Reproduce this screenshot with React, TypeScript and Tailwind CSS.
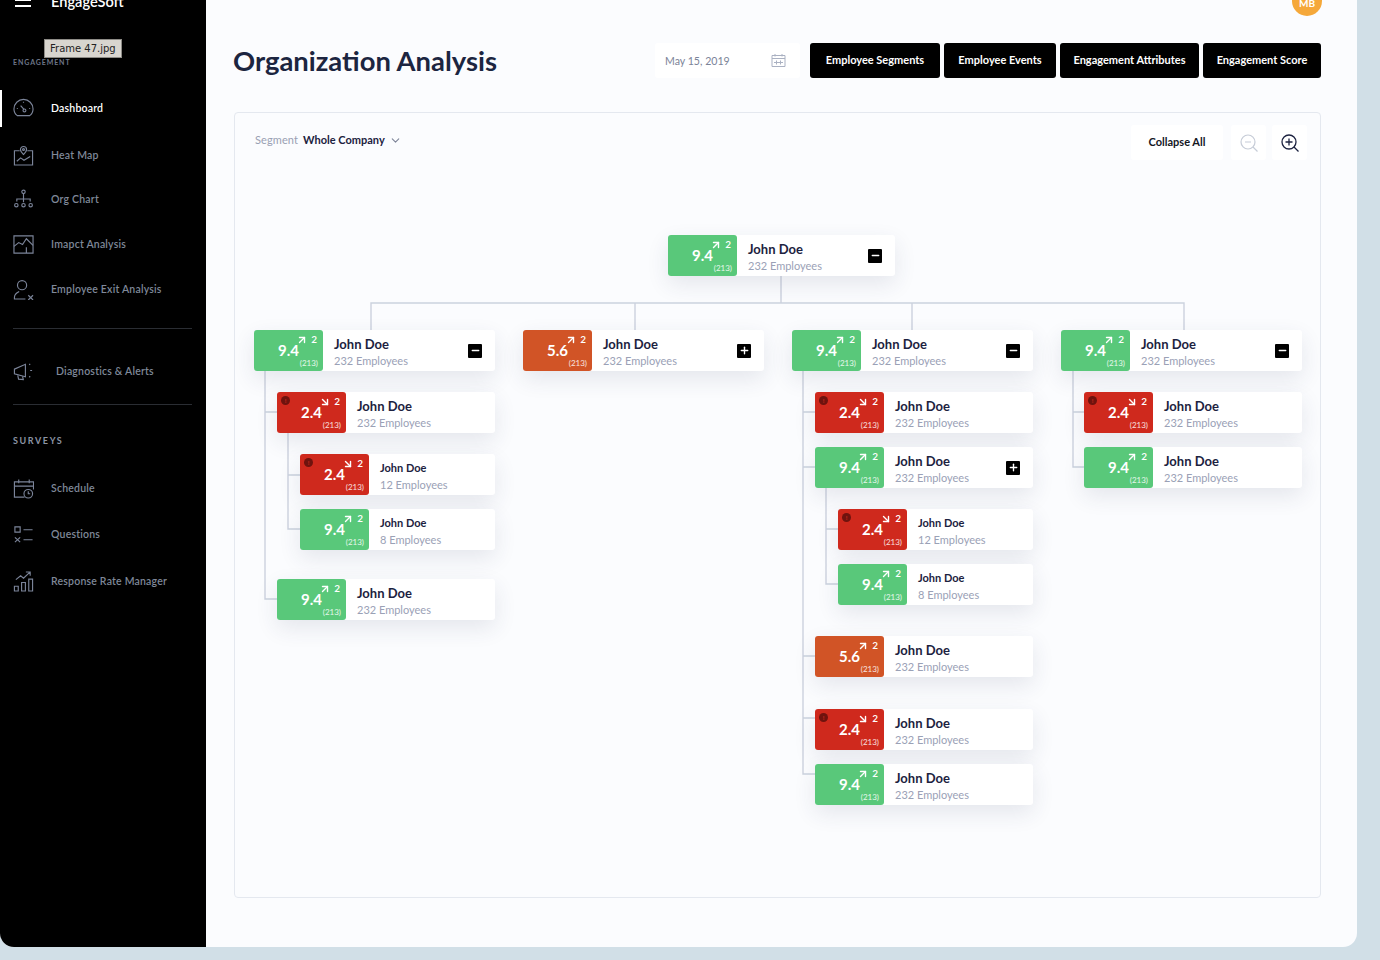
import { ArrowDownRight, ArrowUpRight, ChevronDown, Minus, Plus } from "lucide-react"
import type { ReactNode } from "react"

type Tone = "green" | "orange" | "red"

const icon = { fill: "none", stroke: "#7b8499", strokeWidth: 1.2, width: 21, height: 21, viewBox: "0 0 22 22" }

const DashIcon = () => (
  <svg {...icon}>
    <path d="M4.5 18.5h13c2-1.500 3.500-4 3.500-7a10 10 0 0 0-20 0c0 3 1.500 5.500 3.500 7z" />
    <path d="M8 8l3.500 4" />
    <circle cx="12" cy="13" r="1.500" />
    <path d="M4 11h1M17 11h1M11 4v1" />
  </svg>
)
const HeatIcon = () => (
  <svg {...icon}>
    <path d="M7 6H1.500v15h19V6H15" />
    <path d="M11 10C9 8 7.800 6.500 7.800 4.800a3.200 3.200 0 0 1 6.400 0C14.200 6.500 13 8 11 10z" />
    <circle cx="11" cy="4.800" r="1" />
    <path d="M4 17l4-3.500 3.500 2.500 6.500-4" />
  </svg>
)
const OrgIcon = () => (
  <svg {...icon}>
    <circle cx="11" cy="3" r="1.800" />
    <path d="M11 5v9M4 13v-2.500h14V13" />
    <circle cx="3.500" cy="17" r="1.800" />
    <circle cx="11" cy="17" r="1.800" />
    <circle cx="18.500" cy="17" r="1.800" />
  </svg>
)
const ImpactIcon = () => (
  <svg {...icon}>
    <path d="M1 2h20v18H1z" />
    <path d="M1 13l5-4 4 2 4-6 7 7M14 14v6" />
  </svg>
)
const ExitIcon = () => (
  <svg {...icon}>
    <circle cx="9.500" cy="6.500" r="4.800" />
    <path d="M13 21H1.500v-2c0-3 3-5 5-6" />
    <path d="M16 17l5 5M21 17l-5 5" />
  </svg>
)
const MegaIcon = () => (
  <svg {...icon}>
    <path d="M1.500 8.500L13 3.500v13l-11.500-3z" />
    <path d="M5 15l.800 4 5 .5-.8-3.500" />
    <path d="M17 4l1-1M18 10h2M17 16l1 1" />
  </svg>
)
const ScheduleIcon = () => (
  <svg {...icon}>
    <path d="M12 20H1.500V4h20v8" />
    <path d="M1.500 8.500h20M6 1.500v4M17 1.500v4" />
    <circle cx="16" cy="16.500" r="4.500" />
    <path d="M16 14v2.500h2" />
  </svg>
)
const QuestionsIcon = () => (
  <svg {...icon}>
    <path d="M2 3h5.500v5.500H2zM11 6h9.500M2 14l5.500 5M7.500 14L2 19M11 16.500h9.500" />
  </svg>
)
const ResponseIcon = () => (
  <svg {...icon}>
    <path d="M1.500 16h4v5h-4zM9 12h4v9H9zM16.500 8.500h4V21h-4z" />
    <path d="M3 9l5-4 3 2.500 6.500-6M13.500 1h4.500v4" />
  </svg>
)

const topNav = [
  { label: "Dashboard", icon: <DashIcon />, space: "", active: true },
  { label: "Heat Map", icon: <HeatIcon />, space: "mt-[10px]" },
  { label: "Org Chart", icon: <OrgIcon />, space: "mt-[7px]" },
  { label: "Imapct Analysis", icon: <ImpactIcon />, space: "mt-[8px]" },
  { label: "Employee Exit Analysis", icon: <ExitIcon />, space: "mt-[8px]" },
]

const surveyNav = [
  { label: "Schedule", icon: <ScheduleIcon />, space: "mt-[23px]" },
  { label: "Questions", icon: <QuestionsIcon />, space: "mt-[9px]" },
  { label: "Response Rate Manager", icon: <ResponseIcon />, space: "mt-[10px]" },
]

function NavRow({ label, icon, space, active, textGap = "ml-[17px]" }: { label: string; icon: ReactNode; space?: string; active?: boolean; textGap?: string }) {
  return (
    <div className={`relative flex h-[37px] items-center pl-[13px] ${space ?? ""}`}>
      {active && <span className="absolute left-0 top-0 h-full w-[2px] bg-white" />}
      {icon}
      <span className={`${textGap} text-[10.5px] font-semibold tracking-[0.2px] ${active ? "text-white" : "text-[#7f8899]"}`}>{label}</span>
    </div>
  )
}

function Sidebar() {
  return (
    <aside className="relative h-full w-[206px] shrink-0 bg-black">
      <div className="-mt-[7px] flex h-5 items-center pl-[15px]">
        <div className="flex w-[16px] flex-col gap-[4px]">
          <span className="h-[2px] bg-white" />
          <span className="h-[2px] bg-white" />
        </div>
        <span className="-mt-[2px] ml-[20px] text-[14.6px] font-semibold text-white">EngageSoft</span>
      </div>
      <div className="absolute left-[44px] top-[39px] border border-[#8d8b86] bg-[#d8d5cf] px-[5px] py-[1px] text-[10px] leading-[15px] text-[#222] [font-family:'DejaVu_Sans',sans-serif]">
        Frame 47.jpg
      </div>
      <div className="mt-[44px] h-[10px] pl-[13px] text-[7px] font-bold leading-[10px] tracking-[0.9px] text-[#6d7688]">ENGAGEMENT</div>
      <nav className="mt-[23px]">
        {topNav.map((item) => (
          <NavRow key={item.label} {...item} />
        ))}
      </nav>
      <div className="mx-[13px] mt-[20px] h-px w-[179px] bg-[#2a2d33]" />
      <div className="mt-[24px]">
        <NavRow label="Diagnostics & Alerts" icon={<MegaIcon />} textGap="ml-[22px]" />
      </div>
      <div className="mx-[13px] mt-[14px] h-px w-[179px] bg-[#2a2d33]" />
      <div className="mt-[30px] h-[12px] pl-[13px] text-[9px] font-bold leading-[12px] tracking-[1.6px] text-[#8c94a5]">SURVEYS</div>
      <nav>
        {surveyNav.map((item) => (
          <NavRow key={item.label} {...item} />
        ))}
      </nav>
    </aside>
  )
}

const toneClass: Record<Tone, string> = {
  green: "bg-[#59c87a]",
  orange: "bg-[#d15426]",
  red: "bg-[#cf291d]",
}

const scores: Record<Tone, string> = { green: "9.4", orange: "5.6", red: "2.4" }

const widths = { 0: "w-[227px]", 1: "w-[241px]", 2: "w-[218px]", 3: "w-[195px]" }

function Node({ tone, level, sub = "232 Employees", toggle, space = "" }: { tone: Tone; level: 0 | 1 | 2 | 3; sub?: string; toggle?: "plus" | "minus"; space?: string }) {
  const Arrow = tone === "red" ? ArrowDownRight : ArrowUpRight
  return (
    <div className={`flex h-[41px] items-stretch rounded-[3px] bg-white shadow-[0_8px_22px_rgba(45,55,95,0.11)] ${widths[level]} ${space}`}>
      <div className={`relative flex w-[69px] shrink-0 items-center justify-center rounded-[3px] text-[15px] font-bold text-white ${toneClass[tone]}`}>
        {scores[tone]}
        {tone === "red" && (
          <span className="absolute left-[4px] top-[4px] flex h-[9px] w-[9px] items-center justify-center rounded-full bg-[#6f130e] text-[6px] leading-none text-[#cf291d]">!</span>
        )}
        <span className="absolute right-[6px] top-[3px] flex items-center gap-[3px] text-[10px] font-semibold leading-[13px]">
          <Arrow size={12} strokeWidth={2.8} />2
        </span>
        <span className="absolute bottom-[3px] right-[5px] text-[8px] font-normal leading-[10px] text-white/85">(213)</span>
      </div>
      <div className="ml-[11px] flex flex-col justify-center pt-[4px]">
        <div className={`font-bold text-[#1c2240] ${level === 3 ? "-mt-px text-[11px] leading-[18px]" : "text-[13px] leading-[17px]"}`}>John Doe</div>
        <div className="text-[11px] leading-[16px] text-[#9aa1b6]">{sub}</div>
      </div>
      {toggle && (
        <div className="ml-auto mr-[13px] flex h-[14px] w-[14px] items-center justify-center self-center rounded-[1px] bg-black text-white">
          {toggle === "plus" ? <Plus size={11} strokeWidth={3} /> : <Minus size={11} strokeWidth={3} />}
        </div>
      )}
    </div>
  )
}

// connector lines in page coordinates, drawn under the nodes
const lines = [
  "M781 276V303M371 330V303H1184V330M635 303V330M912 303V330",
  "M265 371V599H277M265 412H277M288 433V529H300M288 475H300",
  "M803 371V774H815M803 412H815M803 467H815M803 656H815M803 718H815",
  "M826 488V584H838M826 529H838",
  "M1073 371V467H1085M1073 412H1085",
]

function Chart() {
  return (
    <section className="relative h-[786px] rounded-[4px] border border-[#e4e8ef] px-[13px] pt-[12px]">
      <svg className="absolute -left-px -top-px" width={1087} height={786} viewBox="234 112 1087 786" fill="none" stroke="#ccd2de" strokeWidth={1.4}>
        {lines.map((d) => (
          <path key={d} d={d} />
        ))}
      </svg>

      <div className="relative flex h-[35px] items-start justify-between">
        <div className="ml-[7px] mt-[7px] flex items-center text-[11px]">
          <span className="tracking-[0.1px] text-[#99a0b3]">Segment</span>
          <span className="ml-[5px] font-bold text-[#1c2240]">Whole Company</span>
          <ChevronDown size={13} className="ml-[4px] text-[#7d8498]" />
        </div>
        <div className="flex">
          <button className="h-[35px] w-[92px] rounded-[3px] bg-white text-[11px] font-bold text-[#14171f]">Collapse All</button>
          <div className="ml-[8px] flex h-[35px] w-[35px] items-center justify-center rounded-[3px] bg-white">
            <svg width="20" height="20" viewBox="0 0 20 20" fill="none" stroke="#c6ccd7" strokeWidth="1.200">
              <circle cx="9" cy="9" r="7" />
              <path d="M6 9h6M14 14l4.500 4.500" />
            </svg>
          </div>
          <div className="ml-[6px] flex h-[35px] w-[35px] items-center justify-center rounded-[3px] bg-white">
            <svg width="20" height="20" viewBox="0 0 20 20" fill="none" stroke="#1c2240" strokeWidth="1.300">
              <circle cx="9" cy="9" r="7" />
              <path d="M5.500 9h7M9 5.500v7M14 14l4.500 4.500" />
            </svg>
          </div>
        </div>
      </div>

      <div className="relative ml-[420px] mt-[75px]">
        <Node tone="green" level={0} toggle="minus" />
      </div>

      <div className="relative ml-[6px] mt-[54px] flex gap-[28px]">
        <div className="flex w-[241px] flex-col items-end">
          <Node tone="green" level={1} toggle="minus" />
          <Node tone="red" level={2} space="mt-[21px]" />
          <Node tone="red" level={3} sub="12 Employees" space="mt-[21px]" />
          <Node tone="green" level={3} sub="8 Employees" space="mt-[14px]" />
          <Node tone="green" level={2} space="mt-[29px]" />
        </div>
        <div className="w-[241px]">
          <Node tone="orange" level={1} toggle="plus" />
        </div>
        <div className="flex w-[241px] flex-col items-end">
          <Node tone="green" level={1} toggle="minus" />
          <Node tone="red" level={2} space="mt-[21px]" />
          <Node tone="green" level={2} toggle="plus" space="mt-[14px]" />
          <Node tone="red" level={3} sub="12 Employees" space="mt-[21px]" />
          <Node tone="green" level={3} sub="8 Employees" space="mt-[14px]" />
          <Node tone="orange" level={2} space="mt-[31px]" />
          <Node tone="red" level={2} space="mt-[32px]" />
          <Node tone="green" level={2} space="mt-[14px]" />
        </div>
        <div className="flex w-[241px] flex-col items-end">
          <Node tone="green" level={1} toggle="minus" />
          <Node tone="red" level={2} space="mt-[21px]" />
          <Node tone="green" level={2} space="mt-[14px]" />
        </div>
      </div>
    </section>
  )
}

const actions = [
  { label: "Employee Segments", width: "w-[130px]" },
  { label: "Employee Events", width: "w-[112px]" },
  { label: "Engagement Attributes", width: "w-[139px]" },
  { label: "Engagement Score", width: "w-[118px]" },
]

export default function App() {
  return (
    <div className="h-[960px] w-[1380px] overflow-hidden bg-[#d1dfe7] [font-family:Lato,sans-serif]">
      <div className="flex h-[947px] w-[1357px] overflow-hidden rounded-b-[14px] bg-[#fbfcfe]">
        <Sidebar />
        <main className="relative flex-1 pl-[28px] pr-[36px] pt-[43px]">
          <div className="absolute -top-[14px] right-[35px] flex h-[30px] w-[30px] items-end justify-center rounded-full bg-[#f5a83a] pb-[8px] text-[10px] font-bold leading-none text-white">MB</div>
          <header className="flex h-[35px] items-center">
            <h1 className="-ml-px text-[27.4px] font-bold text-[#1c2540]">Organization Analysis</h1>
            <div className="ml-auto flex h-[35px] w-[145px] items-center justify-between rounded-[3px] bg-white pl-[10px] pr-[14px] text-[10.6px] text-[#7b8398]">
              <span className="mt-[3px]">May 15, 2019</span>
              <svg width="15" height="15" viewBox="0 0 15 15" fill="none" stroke="#aab1c2" strokeWidth="1">
                <path d="M1 2.500h13v11H1zM1 5.500h13M4 1v2.500M11 1v2.500M5.500 7.500v4M9.500 7.500v4M3 9.500h9" />
              </svg>
            </div>
            <div className="ml-[10px] flex gap-[4px]">
              {actions.map((a) => (
                <button key={a.label} className={`h-[35px] rounded-[3px] bg-black text-[11px] font-bold text-white ${a.width}`}>{a.label}</button>
              ))}
            </div>
          </header>
          <div className="mt-[34px]">
            <Chart />
          </div>
        </main>
      </div>
    </div>
  )
}
